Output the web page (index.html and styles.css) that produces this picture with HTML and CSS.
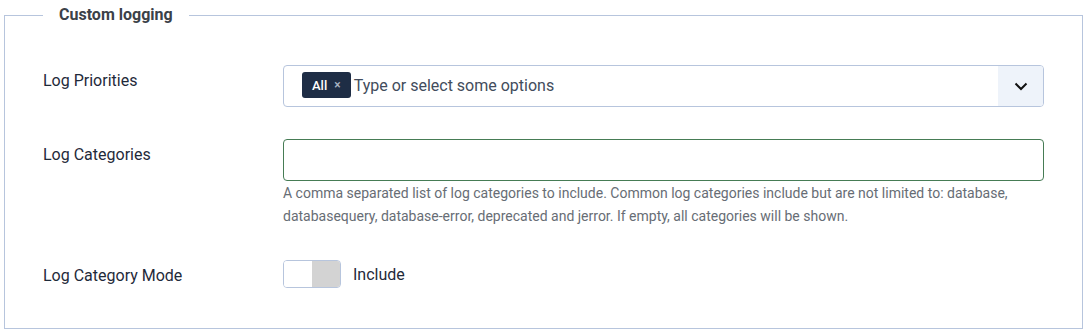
FILE: index.html
```html
<!DOCTYPE html>
<html lang="en">
<head>
<meta charset="utf-8">
<title>Custom logging</title>
<link rel="stylesheet" href="styles.css">
</head>
<body>
<fieldset class="options">
  <legend class="legend">Custom logging</legend>

  <div class="row row-first">
    <label class="label">Log Priorities</label>
    <div class="control">
      <div class="choices">
        <div class="choices-inner">
          <span class="tag">All <span class="tag-x">×</span></span>
          <span class="placeholder">Type or select some options</span>
        </div>
        <div class="choices-btn">
          <svg width="14" height="9" viewBox="0 0 14 9"><path d="M1.5 1.5 L7 7 L12.5 1.5" fill="none" stroke="#111" stroke-width="2"/></svg>
        </div>
      </div>
    </div>
  </div>

  <div class="row">
    <label class="label">Log Categories</label>
    <div class="control">
      <div class="text-input"></div>
      <div class="help">A comma separated list of log categories to include. Common log categories include but are not limited to: database, databasequery, database-error, deprecated and jerror. If empty, all categories will be shown.</div>
    </div>
  </div>

  <div class="row">
    <label class="label">Log Category Mode</label>
    <div class="control switch-row">
      <div class="switch"><span class="switch-on"></span><span class="switch-off"></span></div>
      <span class="switch-text">Include</span>
    </div>
  </div>
</fieldset>
</body>
</html>
```

FILE: styles.css
```css
html, body {
  margin: 0;
  padding: 0;
  background: #fff;
}
body {
  font-family: Roboto, "Liberation Sans", sans-serif;
  color: #22262a;
}
.options {
  margin: 0 5px 0 4px;
  padding: 35px 38px 40px 38px;
  border: 1px solid #b7c5dd;
  min-width: 0;
}
.legend {
  padding: 0 16px;
  font-size: 16px;
  font-weight: 700;
  line-height: 30px;
  color: #3b4148;
}
.row {
  display: flex;
  margin-bottom: 33px;
}
.row-first {
  margin-bottom: 32px;
}
.row:last-child {
  margin-bottom: 0;
}
.label {
  width: 240px;
  flex: none;
  margin-top: 4px;
  font-size: 16px;
  line-height: 24px;
  color: #1f2a3a;
}
.control {
  flex: 1;
  min-width: 0;
}
.choices {
  display: flex;
  height: 42px;
  border: 1px solid #b7c5dd;
  border-radius: 4px;
  box-sizing: border-box;
  overflow: hidden;
}
.choices-inner {
  flex: 1;
  display: flex;
  align-items: center;
  padding-left: 18px;
  padding-bottom: 2px;
}
.tag {
  display: inline-flex;
  align-items: center;
  height: 26px;
  padding: 0 10px 0 10px;
  background: #1e2d45;
  border-radius: 3px;
  color: #fff;
  font-size: 13px;
  font-weight: 500;
}
.tag-x {
  margin-left: 7px;
  color: #a9b3c2;
  font-size: 12px;
}
.placeholder {
  margin-left: 3px;
  font-size: 16px;
  color: #424c5c;
}
.choices-btn {
  width: 45px;
  flex: none;
  display: flex;
  align-items: center;
  justify-content: center;
  background: #eef3fa;
}
.text-input {
  height: 42px;
  border: 1px solid #467c55;
  border-radius: 4px;
  box-sizing: border-box;
}
.help {
  margin-top: 1px;
  font-size: 14px;
  line-height: 22.5px;
  color: #676d75;
}
.switch-row {
  display: flex;
  align-items: center;
  height: 28px;
}
.switch {
  display: flex;
  width: 58px;
  height: 28px;
  border: 1px solid #b7c5dd;
  border-radius: 4px;
  box-sizing: border-box;
  overflow: hidden;
}
.switch-on {
  flex: 1;
  background: #fff;
}
.switch-off {
  flex: 1;
  background: #d3d3d3;
}
.switch-text {
  margin-left: 12px;
  font-size: 16px;
  color: #1f2a3a;
}
```
